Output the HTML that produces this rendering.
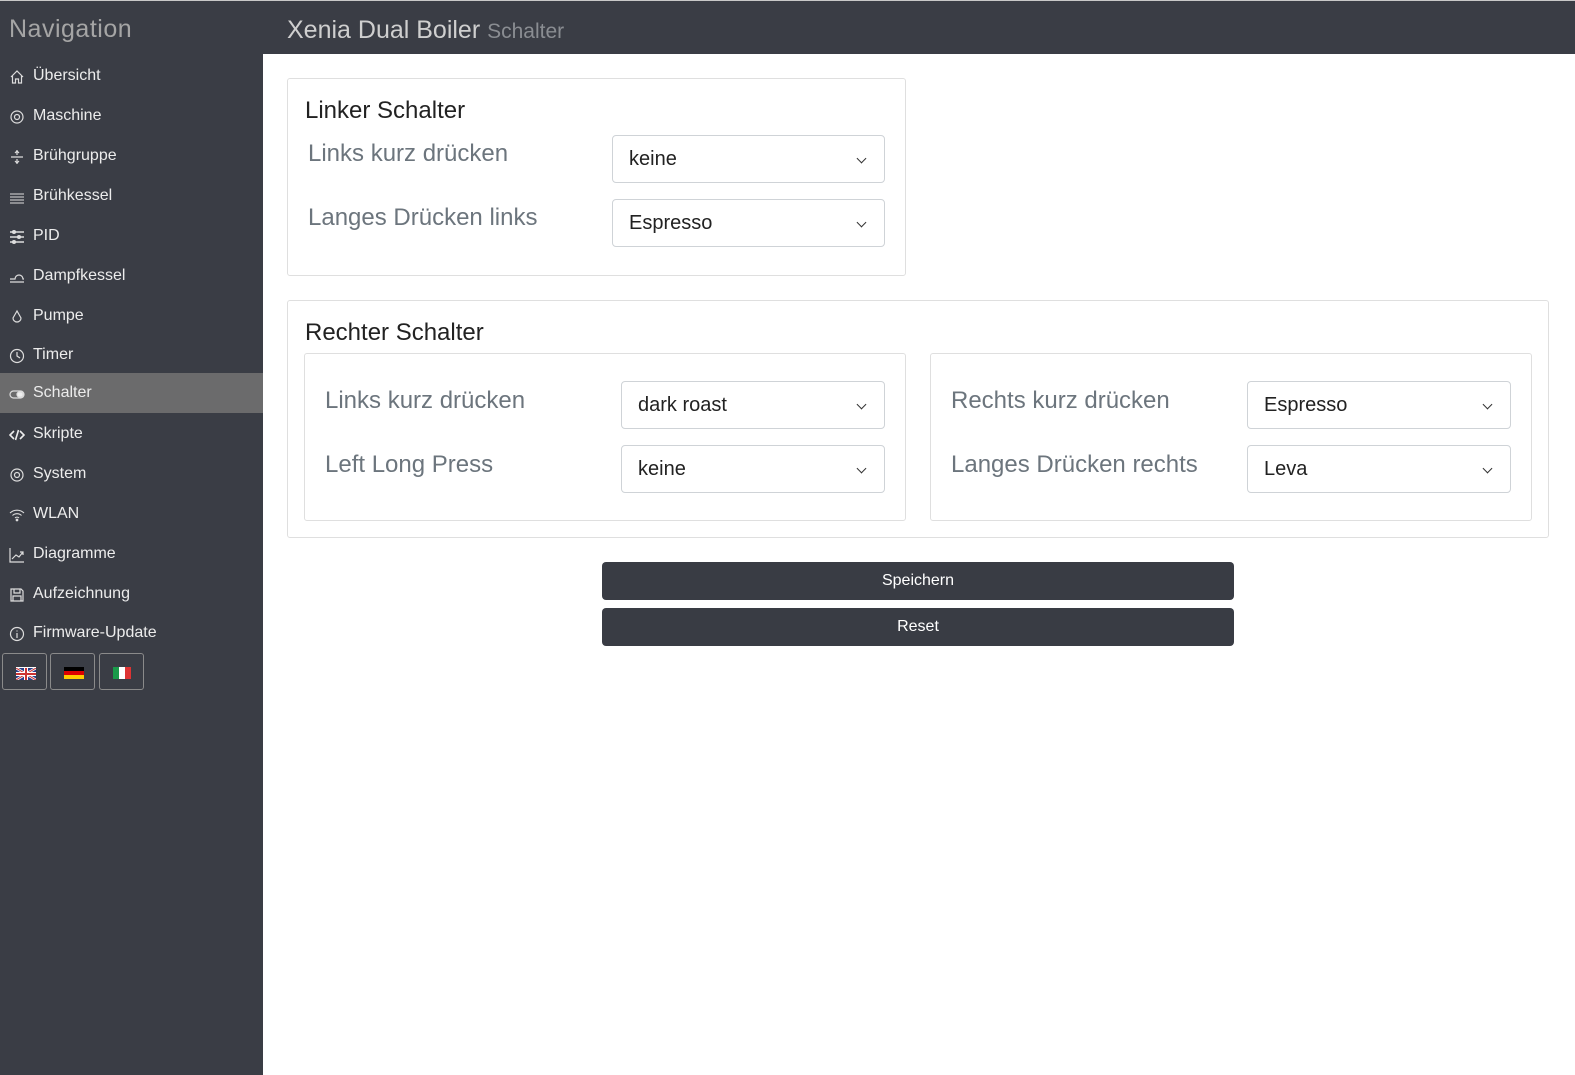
<!DOCTYPE html>
<html><head><meta charset="utf-8"><style>
*{box-sizing:border-box;margin:0;padding:0}
body{width:1575px;height:1075px;position:relative;background:#fff;font-family:"Liberation Sans",sans-serif;overflow:hidden}
.a{position:absolute}
#sb{left:0;top:0;width:263px;height:1075px;background:#3a3d45;border-top:1px solid #c8c8c8}
#hd{left:263px;top:0;width:1312px;height:54px;background:#3a3d45;border-top:1px solid #c8c8c8}
.nav{position:absolute;left:0;width:263px;height:40px;color:#ececec;font-size:16px;line-height:40px;padding-left:33px}
.nav svg{position:absolute;left:9px;top:13px}
.act{background:#6b6b6c}
.card{position:absolute;border:1px solid #dfdfdf;border-radius:3px;background:#fff}
.t{position:absolute;font-size:24px;color:#222}
.l{position:absolute;font-size:24px;color:#6c757d}
.s{position:absolute;border:1px solid #cfd3d7;border-radius:4px;height:48px;font-size:20px;color:#222;line-height:46px;padding-left:16px}
.s:after{content:"";position:absolute;right:19px;top:19px;width:6px;height:6px;border-right:1.5px solid #333;border-bottom:1.5px solid #333;transform:rotate(45deg)}
.btn{position:absolute;left:602px;width:632px;height:38px;background:#393c44;border-radius:4px;color:#fff;font-size:16px;text-align:center;line-height:38px}
.fl{position:absolute;top:652px;width:45px;height:37px;border:1px solid #8a8a8a;border-radius:3px}
.fl div{position:absolute;left:13px;top:13px;width:20px;height:12px}
</style></head><body>
<div id="sb" class="a">
<div class="a" style="left:9px;top:14px;font-size:25px;color:#a5a5a5;letter-spacing:.5px">Navigation</div>
<div class="nav" style="top:55px"><svg width="16" height="16" viewBox="0 0 16 16" fill="none" stroke="#ddd" stroke-width="1.2"><path d="M2 8L8 2l6 6M3.5 7v7h3v-4h3v4h3V7"/></svg>Übersicht</div>
<div class="nav" style="top:95px"><svg width="16" height="16" viewBox="0 0 16 16" fill="none" stroke="#ddd" stroke-width="1.2"><circle cx="8" cy="8" r="2.5"/><circle cx="8" cy="8" r="6"/></svg>Maschine</div>
<div class="nav" style="top:135px"><svg width="16" height="16" viewBox="0 0 16 16" fill="none" stroke="#ddd" stroke-width="1.2"><path d="M2 8h12M8 1v5M6 4l2-2 2 2M8 10v5M6 12l2 2 2-2"/></svg>Brühgruppe</div>
<div class="nav" style="top:175px"><svg width="16" height="16" viewBox="0 0 16 16" fill="none" stroke="#ddd" stroke-width="1"><path d="M1 5h14M1 8h14M1 11h14M1 14h14"/></svg>Brühkessel</div>
<div class="nav" style="top:215px"><svg width="16" height="16" viewBox="0 0 16 16" fill="none" stroke="#ddd" stroke-width="1.5"><path d="M1 3h14M1 8h14M1 13h14"/><circle cx="5" cy="3" r="1.3" fill="#ddd"/><circle cx="10" cy="8" r="1.3" fill="#ddd"/><circle cx="5" cy="13" r="1.3" fill="#ddd"/></svg>PID</div>
<div class="nav" style="top:255px"><svg width="16" height="16" viewBox="0 0 16 16" fill="none" stroke="#ddd" stroke-width="1.2"><path d="M1 13h14M1 10h5a4 4 0 0 1 8 0h1"/></svg>Dampfkessel</div>
<div class="nav" style="top:295px"><svg width="16" height="16" viewBox="0 0 16 16" fill="none" stroke="#ddd" stroke-width="1.2"><path d="M8 2L4 9a4 4 0 0 0 8 0z"/></svg>Pumpe</div>
<div class="nav" style="top:334px"><svg width="16" height="16" viewBox="0 0 16 16" fill="none" stroke="#ddd" stroke-width="1.2"><circle cx="8" cy="8" r="6.5"/><path d="M8 4v4l3 2"/></svg>Timer</div>
<div class="nav act" style="top:372px"><svg width="16" height="16" viewBox="0 0 16 16" fill="none" stroke="#ddd" stroke-width="1.2"><rect x="1" y="5" width="14" height="7" rx="3.5"/><rect x="8" y="6" width="6" height="5" rx="2.5" fill="#eee"/></svg>Schalter</div>
<div class="nav" style="top:413px"><svg width="16" height="16" viewBox="0 0 16 16" fill="none" stroke="#eee" stroke-width="1.6"><path d="M5 4L1 8l4 4M11 4l4 4-4 4M9.5 3l-3 10"/></svg>Skripte</div>
<div class="nav" style="top:453px"><svg width="16" height="16" viewBox="0 0 16 16" fill="none" stroke="#ddd" stroke-width="1.2"><circle cx="8" cy="8" r="2.5"/><circle cx="8" cy="8" r="6"/></svg>System</div>
<div class="nav" style="top:493px"><svg width="16" height="16" viewBox="0 0 16 16" fill="none" stroke="#ddd" stroke-width="1.1"><path d="M1 6a10 10 0 0 1 14 0M3.5 8.5a6.5 6.5 0 0 1 9 0M6 11a3 3 0 0 1 4 0"/><circle cx="8" cy="13" r=".8" fill="#ddd"/></svg>WLAN</div>
<div class="nav" style="top:533px"><svg width="16" height="16" viewBox="0 0 16 16" fill="none" stroke="#ddd" stroke-width="1.2"><path d="M1 1v14h14M3 12l4-4 3 2 4-5M11 5h3v3"/></svg>Diagramme</div>
<div class="nav" style="top:573px"><svg width="16" height="16" viewBox="0 0 16 16" fill="none" stroke="#ddd" stroke-width="1.2"><path d="M2 2h10l2 2v10H2zM5 2v4h6V2M4 14V9h8v5"/></svg>Aufzeichnung</div>
<div class="nav" style="top:612px"><svg width="16" height="16" viewBox="0 0 16 16" fill="none" stroke="#ddd" stroke-width="1.2"><circle cx="8" cy="8" r="6.5"/><path d="M8 7v5M8 4.5v1"/></svg>Firmware-Update</div>
<div class="fl" style="left:2px"><div style="background:#fff"><svg width="20" height="12" viewBox="0 0 20 12"><rect width="20" height="12" fill="#2c3f8a"/><path d="M0 0L20 12M20 0L0 12" stroke="#fff" stroke-width="2.5"/><path d="M0 0L20 12M20 0L0 12" stroke="#c33" stroke-width="1"/><path d="M10 0v12M0 6h20" stroke="#fff" stroke-width="4"/><path d="M10 0v12M0 6h20" stroke="#c33" stroke-width="2"/></svg></div></div>
<div class="fl" style="left:50px"><div style="background:linear-gradient(#000 33%,#d00 33%,#d00 66%,#fc0 66%)"></div></div>
<div class="fl" style="left:99px"><div style="left:13px;width:18px;background:linear-gradient(90deg,#1a9a4a 33%,#fff 33%,#fff 66%,#d33 66%)"></div></div>
</div>
<div id="hd" class="a"><div class="a" style="left:24px;top:15px;font-size:25px;color:#cfcfcf;white-space:nowrap">Xenia Dual Boiler <span style="font-size:21px;color:#8a8d92">Schalter</span></div></div>

<div class="card" style="left:287px;top:78px;width:619px;height:198px"></div>
<div class="t" style="left:305px;top:97px">Linker Schalter</div>
<div class="l" style="left:308px;top:140px">Links kurz drücken</div>
<div class="l" style="left:308px;top:204px">Langes Drücken links</div>
<div class="s" style="left:612px;top:135px;width:273px">keine</div>
<div class="s" style="left:612px;top:199px;width:273px">Espresso</div>

<div class="card" style="left:287px;top:300px;width:1262px;height:238px"></div>
<div class="t" style="left:305px;top:319px">Rechter Schalter</div>
<div class="card" style="left:304px;top:353px;width:602px;height:168px"></div>
<div class="card" style="left:930px;top:353px;width:602px;height:168px"></div>
<div class="l" style="left:325px;top:387px">Links kurz drücken</div>
<div class="l" style="left:325px;top:451px">Left Long Press</div>
<div class="s" style="left:621px;top:381px;width:264px">dark roast</div>
<div class="s" style="left:621px;top:445px;width:264px">keine</div>
<div class="l" style="left:951px;top:387px">Rechts kurz drücken</div>
<div class="l" style="left:951px;top:451px">Langes Drücken rechts</div>
<div class="s" style="left:1247px;top:381px;width:264px">Espresso</div>
<div class="s" style="left:1247px;top:445px;width:264px">Leva</div>

<div class="btn" style="top:562px">Speichern</div>
<div class="btn" style="top:608px">Reset</div>
</body></html>
